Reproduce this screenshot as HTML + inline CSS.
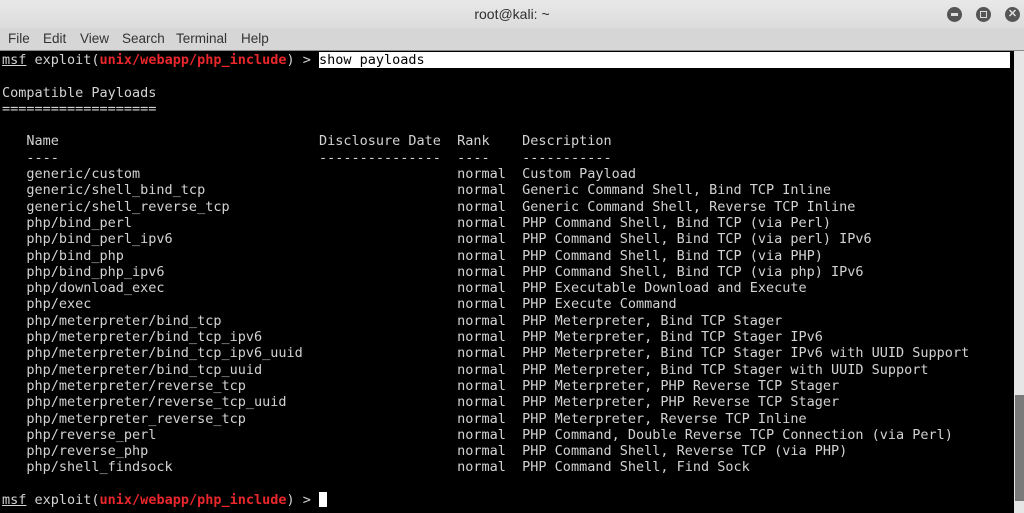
<!DOCTYPE html>
<html><head><style>
body{margin:0;width:1024px;height:513px;overflow:hidden;background:#d6d6d6;font-family:"Liberation Sans",sans-serif;position:relative}
#title{position:absolute;left:0;top:0;width:1024px;height:28px;background:linear-gradient(#e8e8e8,#dcdcdc);text-align:center;line-height:28px;font-size:14px;color:#2e2e2e}
.btn{position:absolute;top:7px;width:15px;height:15px;border-radius:50%;background:#555}
#menu{position:absolute;top:28px;left:0;width:1024px;height:22px;background:#d6d6d6;font-size:13.5px;color:#333;border-bottom:1px solid #888}
#menu span{position:absolute;top:3px}
#term{position:absolute;left:0;top:51px;width:1014px;height:462px;background:#000}
pre{margin:0;position:absolute;left:2px;top:1px;font-family:"DejaVu Sans Mono","Liberation Mono",monospace;font-size:13.5px;line-height:16.3px;color:#d3d3d3;white-space:pre}
.r{color:#e8262b;font-weight:bold}
.u{text-decoration:underline}
.hl{background:#fff;color:#000;display:inline-block;width:691px}
.cur{background:#fff;display:inline-block;width:8px;height:15px;vertical-align:-3px}
#sb{position:absolute;left:1014px;top:51px;width:10px;height:462px;background:#e6e6e6}
#thumb{position:absolute;left:1015px;top:395px;width:9px;height:106px;background:#7a7a7a}
</style></head><body>
<div id="title">root@kali: ~</div>
<div class="btn" style="left:947px"><div style="position:absolute;left:4px;top:6px;width:7px;height:3px;background:#ddd"></div></div>
<div class="btn" style="left:976px"><div style="position:absolute;left:4px;top:4px;width:5px;height:5px;border:1px solid #ddd"></div></div>
<div class="btn" style="left:1005px;color:#ddd;font-size:11px;line-height:15px;text-align:center;font-weight:bold">✕</div>
<div id="menu"><span style="left:8px">File</span><span style="left:43px">Edit</span><span style="left:80px">View</span><span style="left:122px">Search</span><span style="left:176px">Terminal</span><span style="left:241px">Help</span></div>
<div id="term"><pre><span class="u">msf</span> exploit(<span class="r">unix/webapp/php_include</span>) &gt; <span class="hl">show payloads</span>

Compatible Payloads
===================

   Name                                Disclosure Date  Rank    Description
   ----                                ---------------  ----    -----------
   generic/custom                                       normal  Custom Payload
   generic/shell_bind_tcp                               normal  Generic Command Shell, Bind TCP Inline
   generic/shell_reverse_tcp                            normal  Generic Command Shell, Reverse TCP Inline
   php/bind_perl                                        normal  PHP Command Shell, Bind TCP (via Perl)
   php/bind_perl_ipv6                                   normal  PHP Command Shell, Bind TCP (via perl) IPv6
   php/bind_php                                         normal  PHP Command Shell, Bind TCP (via PHP)
   php/bind_php_ipv6                                    normal  PHP Command Shell, Bind TCP (via php) IPv6
   php/download_exec                                    normal  PHP Executable Download and Execute
   php/exec                                             normal  PHP Execute Command
   php/meterpreter/bind_tcp                             normal  PHP Meterpreter, Bind TCP Stager
   php/meterpreter/bind_tcp_ipv6                        normal  PHP Meterpreter, Bind TCP Stager IPv6
   php/meterpreter/bind_tcp_ipv6_uuid                   normal  PHP Meterpreter, Bind TCP Stager IPv6 with UUID Support
   php/meterpreter/bind_tcp_uuid                        normal  PHP Meterpreter, Bind TCP Stager with UUID Support
   php/meterpreter/reverse_tcp                          normal  PHP Meterpreter, PHP Reverse TCP Stager
   php/meterpreter/reverse_tcp_uuid                     normal  PHP Meterpreter, PHP Reverse TCP Stager
   php/meterpreter_reverse_tcp                          normal  PHP Meterpreter, Reverse TCP Inline
   php/reverse_perl                                     normal  PHP Command, Double Reverse TCP Connection (via Perl)
   php/reverse_php                                      normal  PHP Command Shell, Reverse TCP (via PHP)
   php/shell_findsock                                   normal  PHP Command Shell, Find Sock

<span class="u">msf</span> exploit(<span class="r">unix/webapp/php_include</span>) &gt; <span class="cur"></span></pre></div>
<div id="sb"></div><div id="thumb"></div>
</body></html>
